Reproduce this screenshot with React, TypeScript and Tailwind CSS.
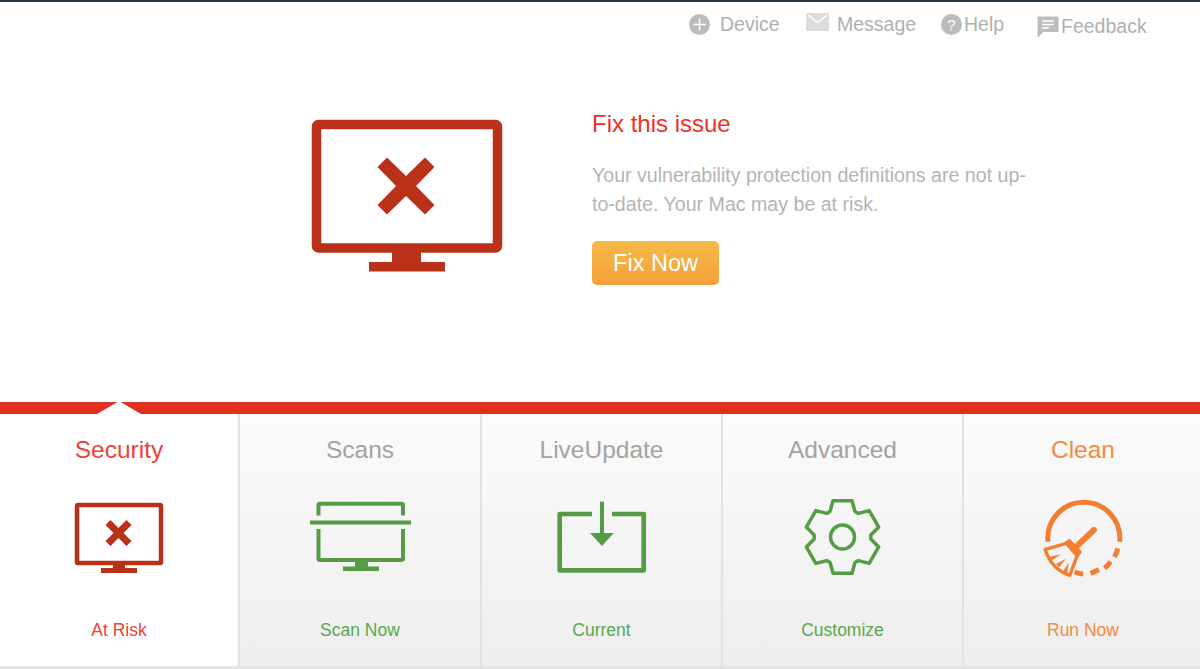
import React from "react";

const DARK_RED = "#b93119";
const GREEN = "#569c47";
const ORANGE = "#f37e30";

function BigMonitor() {
  return (
    <svg width="192" height="154" viewBox="0 0 192 154" className="shrink-0">
      <rect x="5.5" y="5.5" width="181" height="123.5" rx="2" fill="none" stroke={DARK_RED} strokeWidth="9.5" />
      <rect x="81" y="133" width="29" height="11" fill={DARK_RED} />
      <rect x="58" y="143" width="76" height="9.5" fill={DARK_RED} />
      <path d="M76 38.500 L95 57 L114 38.500 L123.500 48 L105 67 L123.500 86 L114 95.500 L95 77 L76 95.500 L66.500 86 L85 67 L66.500 48 Z" fill={DARK_RED} />
    </svg>
  );
}

function SecurityIcon() {
  return (
    <svg width="120" height="80" viewBox="59 497 120 80">
      <rect x="77" y="505" width="84" height="58" rx="1" fill="none" stroke={DARK_RED} strokeWidth="4.500" />
      <rect x="113" y="565" width="12" height="5" fill={DARK_RED} />
      <rect x="101" y="568" width="36" height="5" fill={DARK_RED} />
      <path d="M110.500 520 L118.500 528 L126.500 520 L131.500 525 L123.500 533 L131.500 541 L126.500 546 L118.500 538 L110.500 546 L105.500 541 L113.500 533 L105.500 525 Z" fill={DARK_RED} />
    </svg>
  );
}

function ScanIcon() {
  return (
    <svg width="120" height="80" viewBox="300 497 120 80">
      <path d="M318.500 515.500 V505 Q318.500 503.700 320 503.700 H401 Q403 503.700 403 505 V515.500 M318.500 529 V558.500 Q318.500 560 320 560 H401 Q403 560 403 558.500 V529" fill="none" stroke={GREEN} strokeWidth="4" />
      <rect x="310" y="520.500" width="101" height="4" fill={GREEN} />
      <rect x="355" y="561" width="13" height="6" fill={GREEN} />
      <rect x="343" y="566.500" width="36" height="4.500" fill={GREEN} />
    </svg>
  );
}

function UpdateIcon() {
  return (
    <svg width="120" height="80" viewBox="542 497 120 80">
      <path d="M592 514 H559.700 V570.300 H643.700 V514 H612" fill="none" stroke={GREEN} strokeWidth="4.700" strokeLinejoin="round" />
      <rect x="600" y="501.700" width="4" height="33" fill={GREEN} />
      <path d="M590 533 H613.700 L602 546 Z" fill={GREEN} />
    </svg>
  );
}

function gearPath(cx: number, cy: number) {
  const pts: string[] = [];
  for (let i = 0; i < 6; i++) {
    const a = (i * Math.PI) / 3;
    const c = Math.cos(a);
    const s = Math.sin(a);
    const local: [number, number][] = [
      [-12.5, -25.5],
      [-9.5, -36.3],
      [9.5, -36.3],
      [12.5, -25.5],
    ];
    for (const [x, y] of local) {
      pts.push(`${(cx + x * c - y * s).toFixed(2)} ${(cy + x * s + y * c).toFixed(2)}`);
    }
  }
  return `M${pts.join(" L")} Z`;
}

function GearIcon() {
  return (
    <svg width="120" height="80" viewBox="783 497 120 80">
      <path d={gearPath(842.5, 537)} fill="none" stroke={GREEN} strokeWidth="3.500" strokeLinejoin="round" />
      <circle cx="842.500" cy="537" r="12" fill="none" stroke={GREEN} strokeWidth="3.500" />
    </svg>
  );
}

function CleanIcon() {
  return (
    <svg width="120" height="80" viewBox="1022.500 497 120 80">
      <g transform="translate(1030 490) scale(0.3333)">
        <path d="M52.500 155 A108 108 0 1 1 267.500 155" fill="none" stroke={ORANGE} strokeWidth="15" />
        <path d="M262 175 Q258 189 252 201 M240 215 Q232 227 222 235 M205 238 Q193 246 180 250 M158 252 Q145 251 132 246" fill="none" stroke={ORANGE} strokeWidth="15" />
        <path d="M190 120 L135 172" fill="none" stroke={ORANGE} strokeWidth="18" strokeLinecap="round" />
        <path d="M102 156 L118 146 L155 186 L140 204 Z" fill={ORANGE} />
        <path d="M44 178 L108 160 L140 197 L118 256 Q62 238 44 178 Z" fill="none" stroke={ORANGE} strokeWidth="10" strokeLinejoin="round" />
        <path d="M58 200 L92 193 L62 212 Z M76 222 L106 206 L86 232 Z M98 243 L115 218 L110 250 Z" fill={ORANGE} />
      </g>
    </svg>
  );
}

const tabs = [
  { title: "Security", caption: "At Risk", width: "w-[240px]", bg: "bg-white", titleC: "text-[#ef4236]", capC: "text-[#ef4236]", icon: <SecurityIcon /> },
  { title: "Scans", caption: "Scan Now", width: "w-[242px]", bg: "bg-gradient-to-b from-[#fbfbfb] to-[#eeeeee]", titleC: "text-[#a3a3a3]", capC: "text-[#5aa84c]", icon: <ScanIcon /> },
  { title: "LiveUpdate", caption: "Current", width: "w-[241px]", bg: "bg-gradient-to-b from-[#fbfbfb] to-[#eeeeee]", titleC: "text-[#a3a3a3]", capC: "text-[#5aa84c]", icon: <UpdateIcon /> },
  { title: "Advanced", caption: "Customize", width: "w-[241px]", bg: "bg-gradient-to-b from-[#fbfbfb] to-[#eeeeee]", titleC: "text-[#a3a3a3]", capC: "text-[#5aa84c]", icon: <GearIcon /> },
  { title: "Clean", caption: "Run Now", width: "flex-1 pl-[2px]", bg: "bg-gradient-to-b from-[#fbfbfb] to-[#eeeeee]", titleC: "text-[#f58a42]", capC: "text-[#f58a42]", icon: <CleanIcon /> },
];

export default function App() {
  return (
    <div className="w-[1200px] h-[669px] overflow-hidden bg-white flex flex-col font-['Liberation_Sans',sans-serif]">
      <div className="h-[2px] bg-[#2c3a48]" />
      <header className="h-[44px] flex items-center pl-[689px] text-[19.500px] text-[#b0b0b0]">
        <svg width="21" height="21" viewBox="0 0 21 21" className="mr-[10px]">
          <circle cx="10.500" cy="10.500" r="10.500" fill="#bcbcbc" />
          <path d="M10.500 4.500 V16.500 M4.500 10.500 H16.500" stroke="#fff" strokeWidth="1.500" />
        </svg>
        <span className="w-[58px] whitespace-nowrap mt-[2px]">Device</span>
        <svg width="23" height="18" viewBox="0 0 23 18" className="ml-[28px] mr-[8px] mb-[5px]">
          <rect width="23" height="18" rx="1" fill="#dcdcdc" />
          <path d="M2 2 L11.500 9.500 L21 2" fill="none" stroke="#fff" strokeWidth="1.500" />
        </svg>
        <span className="w-[79px] whitespace-nowrap mt-[2px]">Message</span>
        <svg width="21" height="21" viewBox="0 0 21 21" className="ml-[25px] mr-[2px]">
          <circle cx="10.500" cy="10.500" r="10.500" fill="#bcbcbc" />
          <text x="10.500" y="16" textAnchor="middle" fontSize="15" fill="#fff" fontFamily="Liberation Sans, sans-serif">?</text>
        </svg>
        <span className="w-[40px] whitespace-nowrap mt-[2px]">Help</span>
        <svg width="22" height="22" viewBox="0 0 22 22" className="ml-[33px] mr-[2px] mt-[5px]">
          <path d="M1 1 H21 V15.500 H6 L1 21 Z" fill="#bcbcbc" stroke="#bcbcbc" strokeWidth="1" strokeLinejoin="round" />
          <path d="M5 5 H17 M5 8.500 H17 M5 12 H12" stroke="#fff" strokeWidth="1.500" />
        </svg>
        <span className="w-[86px] whitespace-nowrap mt-[6px]">Feedback</span>
      </header>

      <main className="h-[356px] flex pl-[311px] pt-[73px]">
        <BigMonitor />
        <div className="ml-[89px] flex flex-col items-start -mt-[10px]">
          <h1 className="text-[24px] leading-[30px] text-[#ee3124]">Fix this issue</h1>
          <p className="mt-[22px] w-[440px] text-[19.600px] leading-[29px] text-[#b4b4b4]">
            Your vulnerability protection definitions are not up-to-date. Your Mac may be at risk.
          </p>
          <button className="mt-[22px] w-[127px] h-[44px] pt-[2px] rounded-[5px] bg-gradient-to-b from-[#f6bb47] to-[#f39f3b] text-white text-[23.500px]">
            Fix Now
          </button>
        </div>
      </main>

      <div className="relative h-[12px] bg-[#e2301f] border-t border-[#cf3a30]">
        <svg width="44" height="12" viewBox="0 0 44 12" className="absolute left-[97px] -top-px">
          <path d="M0 12 L20.500 0 L23.500 0 L44 12 Z" fill="#fff" />
        </svg>
      </div>

      <nav className="h-[255px] flex border-b-[3px] border-[#e4e4e4]">
        {tabs.map((t, i) => (
          <div key={t.title} className={`${t.width} ${t.bg} ${i < 4 ? "border-r-2 border-[#e2e2e2]" : ""} flex flex-col items-center pt-[19px]`}>
            <div className={`text-[24.500px] leading-[34px] ${t.titleC}`}>{t.title}</div>
            <div className="mt-[30px]">{t.icon}</div>
            <div className={`mt-[41px] text-[17.500px] leading-[24px] ${t.capC}`}>{t.caption}</div>
          </div>
        ))}
      </nav>
    </div>
  );
}
